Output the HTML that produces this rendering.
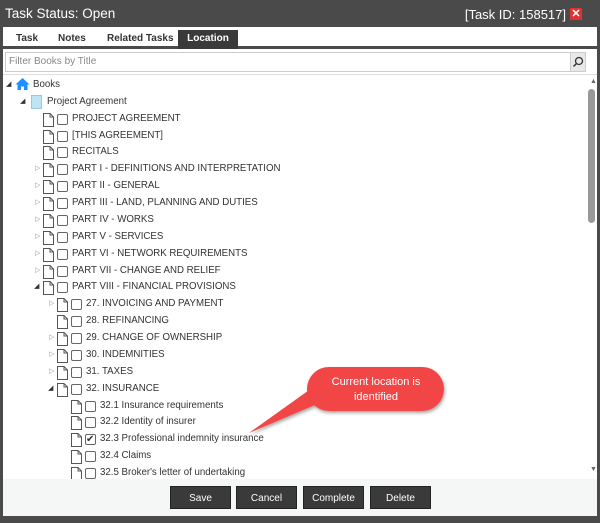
<!DOCTYPE html>
<html><head><meta charset="utf-8"><style>
*{margin:0;padding:0;box-sizing:border-box}
body{width:600px;height:523px;overflow:hidden;background:#4a4a4a;font-family:"Liberation Sans",sans-serif;position:relative}
.t{position:absolute;color:#fff}
.win{position:absolute;left:3px;top:27px;width:594px;height:489px;background:#fff}
.tabs{position:absolute;left:3px;top:27px;width:594px;height:22px;border-bottom:3px solid #4a4a4a;background:#fff}
.tab{position:absolute;top:3px;font-size:10px;font-weight:bold;color:#333;line-height:17px}
.act{background:#3a3a3a;color:#fff;height:19px;top:3px;padding:0}
.row{position:absolute;height:17px;line-height:17px;font-size:9.7px;color:#333;white-space:nowrap}
.doc{position:absolute;top:3px}
.cb{position:absolute;top:4px;width:11px;height:11px;border:1px solid #666;border-radius:2px;background:#fff}
.ex{position:absolute;top:0;font-size:7px;color:#999}
.exo{position:absolute;top:0;font-size:7px;color:#333}
.btn{position:absolute;top:486px;height:23px;background:#3a3a3a;color:#fff;font-size:10px;text-align:center;line-height:23px;border:1px solid #222}
</style></head><body>
<div class="t" style="left:5px;top:6px;font-size:13.5px">Task Status: Open</div>
<div class="t" style="right:34px;top:7px;font-size:13px">[Task ID: 158517]</div>
<div style="position:absolute;left:570px;top:8px;width:12px;height:12px;background:#d33;color:#fff;font-size:11px;line-height:12px;text-align:center;font-weight:bold">✕</div>
<div class="win"></div>
<div class="tabs">
<div class="tab" style="left:13px">Task</div>
<div class="tab" style="left:55px">Notes</div>
<div class="tab" style="left:104px">Related Tasks</div>
<div class="tab act" style="left:175px;width:60px;text-align:center">Location</div>
</div>
<div style="position:absolute;left:5px;top:52px;width:581px;height:20px;border:1px solid #ccc;background:#fff;font-size:10px;color:#888;line-height:18px;padding-left:3px">Filter Books by Title</div>
<div style="position:absolute;left:570px;top:53px;width:15px;height:18px;background:#e8e8e8;border-left:1px solid #ccc;text-align:center;color:#333"><svg width="12" height="12" style="margin-top:3px"><circle cx="7" cy="5" r="3.5" fill="none" stroke="#333" stroke-width="1.3"/><line x1="4.5" y1="7.5" x2="1.5" y2="10.5" stroke="#333" stroke-width="1.5"/></svg></div>
<div style="position:absolute;left:3px;top:74px;width:594px;height:1px;background:#ddd"></div>
<div style="position:absolute;left:590px;top:78px;font-size:7px;color:#666">▲</div>
<div style="position:absolute;left:588px;top:89px;width:7px;height:134px;background:#999;border-radius:4px"></div>
<div style="position:absolute;left:590px;top:466px;font-size:7px;color:#666">▼</div>
<div id="tree"></div>
<div style="position:absolute;left:3px;top:479px;width:594px;height:37px;background:#f5f7f7"></div>
<div class="btn" style="left:170px;width:61px">Save</div>
<div class="btn" style="left:236px;width:61px">Cancel</div>
<div class="btn" style="left:303px;width:61px">Complete</div>
<div class="btn" style="left:370px;width:61px">Delete</div>
<svg style="position:absolute;left:0;top:0" width="600" height="523">
<defs><filter id="s"><feDropShadow dx="1" dy="2" stdDeviation="1.5" flood-opacity="0.35"/></filter></defs>
<g filter="url(#s)" fill="#f24444"><polygon points="312,388 322,402 249,433"/><rect x="307" y="367" width="137" height="44" rx="22"/></g>
<text x="376" y="385" fill="#fff" font-size="11" text-anchor="middle" font-family="Liberation Sans">Current location is</text>
<text x="376" y="400" fill="#fff" font-size="11" text-anchor="middle" font-family="Liberation Sans">identified</text>
</svg>
<script>
var rows=[
[0,'o','Books'],[1,'o','Project Agreement'],
[2,'','PROJECT AGREEMENT'],[2,'','[THIS AGREEMENT]'],[2,'','RECITALS'],
[2,'c','PART I - DEFINITIONS AND INTERPRETATION'],[2,'c','PART II - GENERAL'],[2,'c','PART III - LAND, PLANNING AND DUTIES'],[2,'c','PART IV - WORKS'],[2,'c','PART V - SERVICES'],[2,'c','PART VI - NETWORK REQUIREMENTS'],[2,'c','PART VII - CHANGE AND RELIEF'],[2,'o','PART VIII - FINANCIAL PROVISIONS'],
[3,'c','27. INVOICING AND PAYMENT'],[3,'','28. REFINANCING'],[3,'c','29. CHANGE OF OWNERSHIP'],[3,'c','30. INDEMNITIES'],[3,'c','31. TAXES'],[3,'o','32. INSURANCE'],
[4,'','32.1 Insurance requirements'],[4,'','32.2 Identity of insurer'],[4,'k','32.3 Professional indemnity insurance'],[4,'','32.4 Claims'],[4,'','32.5 Broker\'s letter of undertaking']];
var doc='<svg width="11" height="14"><path d="M0.5 0.5H7L10.5 4V13.5H0.5Z M7 0.5V4H10.5" fill="#fff" stroke="#555"/></svg>';
var h='';
rows.forEach(function(r,i){
var top=76+i*16.87, L=r[0], x=6+L*14;
h+='<div class="row" style="left:0;top:'+top+'px;width:585px">';
if(r[1]=='o')h+='<span class="exo" style="left:'+(x)+'px">◢</span>';
if(r[1]=='c')h+='<span class="ex" style="left:'+(x+1)+'px">▷</span>';
if(L==0){h+='<svg style="position:absolute;left:15px;top:1px" width="15" height="14"><path d="M7.5 1L14.5 7.5H12.5V13H9V9.5H6V13H2.5V7.5H0.5Z" fill="#1e90ff"/></svg><span style="position:absolute;left:33px">Books</span>';}
else if(L==1){h+='<span style="position:absolute;left:31px;top:2px;width:11px;height:14px;background:#bfe3f7;border:1px solid #9cc"></span><span style="position:absolute;left:47px">'+r[2]+'</span>';}
else{var d=x+9;h+='<span class="doc" style="left:'+d+'px">'+doc+'</span><span class="cb" style="left:'+(d+14)+'px">'+(r[1]=='k'?'<span style="position:absolute;left:0;top:-4px;font-size:10px;color:#333">✔</span>':'')+'</span><span style="position:absolute;left:'+(d+29)+'px">'+r[2]+'</span>';}
h+='</div>';});
document.getElementById('tree').innerHTML=h;
</script>
</body></html>
